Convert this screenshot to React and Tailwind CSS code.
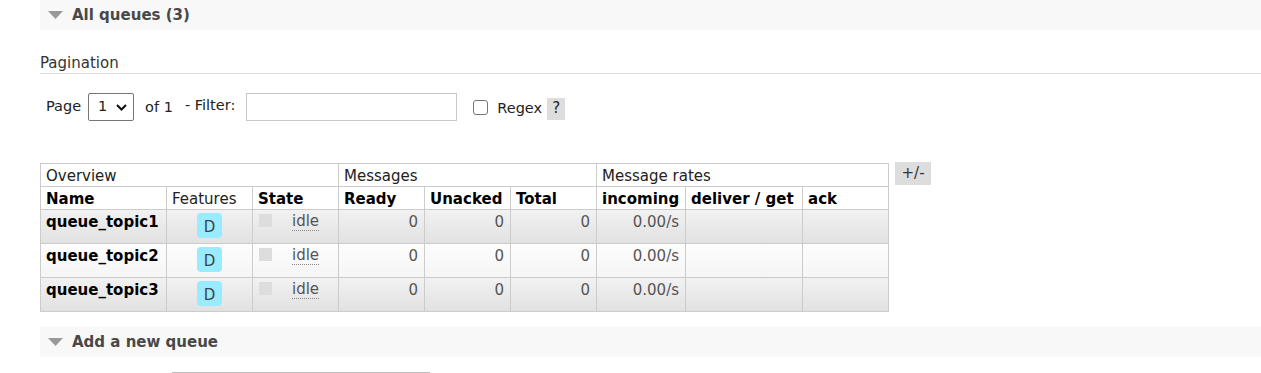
import React from 'react';

const rows = ['queue_topic1', 'queue_topic2', 'queue_topic3'];

function Triangle() {
  return (
    <svg width="15" height="8" viewBox="0 0 15 8" className="shrink-0">
      <polygon points="0,0 15,0 7.5,8" fill="#999" />
    </svg>
  );
}

function SectionBar({ title }) {
  return (
    <div className="h-[30px] bg-[#f8f8f8] flex items-center pl-[8px] gap-[9px]">
      <Triangle />
      <span className="text-[15px] font-bold text-[#484848]">{title}</span>
    </div>
  );
}

export default function App() {
  const th = 'border border-[#ccc] text-left font-normal px-[5px] h-[23px] align-middle pt-[1px]';
  const td = 'border border-[#ccc] align-top pt-[3px] h-[34px]';
  return (
    <div className="pl-[40px] bg-white text-black font-['DejaVu_Sans',sans-serif] text-[15px] w-[1261px] h-[373px] overflow-hidden">
      <SectionBar title="All queues (3)" />

      {/* Pagination */}
      <div className="mt-[24px] border-b border-[#ddd] pb-[0px] text-[#333] leading-[19px]">Pagination</div>
      <div className="flex items-center mt-[19px] pl-[6px] text-[#222] text-[14.5px]">
        <span>Page</span>
        <div className="ml-[7px] w-[46px] h-[28px] border border-[#767676] rounded-[2px] flex items-center justify-between pl-[9px] pr-[6px] bg-white">
          <span>1</span>
          <svg width="11" height="7" viewBox="0 0 11 7">
            <polyline points="1,1 5.5,5.5 10,1" fill="none" stroke="#111" strokeWidth="2" />
          </svg>
        </div>
        <span className="ml-[11px] mt-[2px]">of 1</span>
        <span className="ml-[12px] -mt-[2px]">- Filter:</span>
        <div className="ml-[11px] w-[211px] h-[28px] border border-[#c8c8c8] bg-white" />
        <div className="ml-[16px] w-[15px] h-[15px] border border-[#767676] rounded-[3px] bg-white" />
        <span className="ml-[9px] mt-[3px]">Regex</span>
        <span className="ml-[5px] mt-[3px] w-[18px] h-[22px] bg-[#ddd] flex items-center justify-center text-[15px]">?</span>
      </div>

      {/* Table */}
      <div className="flex items-start mt-[42px]">
        <table className="table-fixed border-collapse w-[848px] text-[15px] leading-[18px]">
          <colgroup>
            <col className="w-[126px]" />
            <col className="w-[86px]" />
            <col className="w-[86px]" />
            <col className="w-[86px]" />
            <col className="w-[86px]" />
            <col className="w-[86px]" />
            <col className="w-[89px]" />
            <col className="w-[117px]" />
            <col className="w-[86px]" />
          </colgroup>
          <thead>
            <tr className="text-[#222]">
              <th colSpan={3} className={th}>Overview</th>
              <th colSpan={3} className={th}>Messages</th>
              <th colSpan={3} className={th}>Message rates</th>
            </tr>
            <tr>
              <th className={th + ' !font-bold'}>Name</th>
              <th className={th + ' text-[#222]'}>Features</th>
              <th className={th + ' !font-bold'}>State</th>
              <th className={th + ' !font-bold'}>Ready</th>
              <th className={th + ' !font-bold'}>Unacked</th>
              <th className={th + ' !font-bold'}>Total</th>
              <th className={th + ' !font-bold'}>incoming</th>
              <th className={th + ' !font-bold'}>deliver / get</th>
              <th className={th + ' !font-bold'}>ack</th>
            </tr>
          </thead>
          <tbody>
            {rows.map((name, i) => (
              <tr
                key={name}
                className={
                  i % 2 === 0
                    ? 'bg-[linear-gradient(#f2f2f2,#e1e1e1)]'
                    : 'bg-[linear-gradient(#fdfdfd,#f5f5f5)]'
                }
              >
                <td className={td + ' px-[5px] font-bold'}>{name}</td>
                <td className={td}>
                  <div className="mx-auto w-[25px] h-[25px] rounded-[4px] bg-[#99ebff] text-[#444] flex items-center justify-center pt-[2px]">D</div>
                </td>
                <td className={td + ' pl-[6px]'}>
                  <div className="flex items-start">
                    <span className="mt-[1px] w-[13px] h-[13px] bg-[#ddd]" />
                    <span className="ml-[20px] text-[#555] border-b border-dotted border-[#888] leading-[17px]">idle</span>
                  </div>
                </td>
                <td className={td + ' text-right pr-[6px] text-[#555]'}>0</td>
                <td className={td + ' text-right pr-[6px] text-[#555]'}>0</td>
                <td className={td + ' text-right pr-[6px] text-[#555]'}>0</td>
                <td className={td + ' text-right pr-[6px] text-[#555]'}>0.00/s</td>
                <td className={td} />
                <td className={td} />
              </tr>
            ))}
          </tbody>
        </table>
        <div className="ml-[6px] -mt-[1px] w-[36px] h-[23px] bg-[#ddd] flex items-center justify-center text-[#333]">+/-</div>
      </div>

      <div className="mt-[15px]">
        <SectionBar title="Add a new queue" />
      </div>
      <div className="ml-[132px] mt-[15px] w-[258px] h-[20px] border-t border-[#bbb]" />
    </div>
  );
}
